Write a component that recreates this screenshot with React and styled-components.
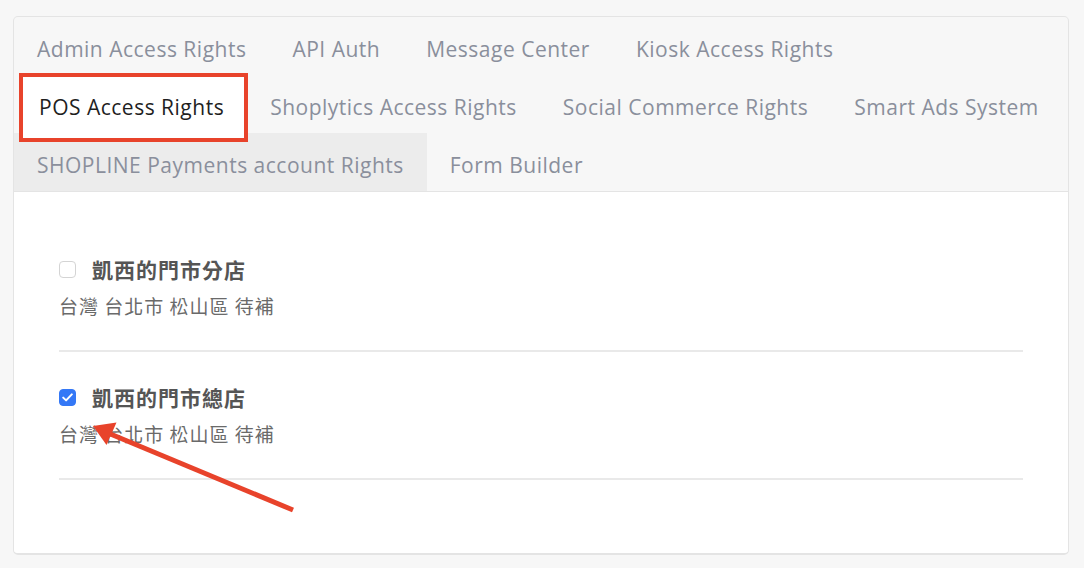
import React from "react";
import styled, { createGlobalStyle } from "styled-components";

const GlobalStyle = createGlobalStyle`
	html, body {
		margin: 0;
		padding: 0;
		background: #f7f7f7;
		font-family: "Open Sans", "Noto Sans CJK TC", sans-serif;
	}
`;

const Page = styled.div`
	position: relative;
	width: 1084px;
	height: 568px;
	padding: 16px 15px 13px 13px;
	box-sizing: border-box;
`;

const Card = styled.div`
	height: 100%;
	border: 1px solid #e4e4e4;
	border-bottom-width: 2px;
	border-radius: 5px;
	background: #f7f7f7;
	box-sizing: border-box;
	overflow: hidden;
	display: flex;
	flex-direction: column;
`;

const TabBar = styled.div`
	display: flex;
	flex-wrap: wrap;
	border-bottom: 1px solid #e4e4e4;
`;

const Tab = styled.a`
	position: relative;
	z-index: ${(p) => (p.$active ? 1 : 0)};
	display: flex;
	align-items: center;
	box-sizing: border-box;
	height: 58px;
	padding: ${(p) => (p.$active ? "5px 23px 0 25px" : "5px 23px 0")};
	font-size: 21px;
	letter-spacing: 0.5px;
	color: ${(p) => (p.$active ? "#1f1f1f" : "#8a8f9c")};
	background: ${(p) => (p.$hover ? "#ececec" : "transparent")};
	white-space: nowrap;
	cursor: pointer;

	${(p) =>
		p.$active &&
		`
		&::after {
			content: "";
			position: absolute;
			left: 5px;
			right: -1px;
			top: -2px;
			bottom: -9px;
			border: 4px solid #e8432b;
			background: #fff;
			z-index: -1;
		}
	`}
`;

const Body = styled.div`
	flex: 1;
	background: #fff;
	padding: 32px 45px 0;
`;

const Item = styled.div`
	padding: 30px 0 31px;
	border-bottom: 2px solid #e9e9e9;
`;

const LabelRow = styled.label`
	display: flex;
	align-items: center;
	gap: 16px;
	height: 30px;
`;

const Box = styled.span`
	width: 17px;
	height: 17px;
	box-sizing: border-box;
	border-radius: 4px;
	border: 1px solid ${(p) => (p.$checked ? "#3478f6" : "#d4d4d4")};
	background: ${(p) => (p.$checked ? "#3478f6" : "#fff")};
	display: flex;
	align-items: center;
	justify-content: center;
	flex-shrink: 0;
`;

const StoreName = styled.span`
	font-family: "Noto Sans CJK TC", sans-serif;
	font-size: 21px;
	letter-spacing: 1px;
	font-weight: 700;
	color: #555;
`;

const Address = styled.div`
	margin-top: 9px;
	line-height: 26px;
	font-family: "Noto Sans CJK TC", sans-serif;
	font-size: 19px;
	letter-spacing: 1px;
	color: #6a6a6a;
`;

const Annotation = styled.svg`
	position: absolute;
	left: 0;
	top: 0;
	pointer-events: none;
`;

const tabs = [
	"Admin Access Rights",
	"API Auth",
	"Message Center",
	"Kiosk Access Rights",
	"POS Access Rights",
	"Shoplytics Access Rights",
	"Social Commerce Rights",
	"Smart Ads System",
	"SHOPLINE Payments account Rights",
	"Form Builder",
];

const stores = [
	{ name: "凱西的門市分店", address: "台灣 台北市 松山區 待補", checked: false },
	{ name: "凱西的門市總店", address: "台灣 台北市 松山區 待補", checked: true },
];

const Checkbox = ({ checked }) => (
	<Box $checked={checked}>
		{checked && (
			<svg width="11" height="9" viewBox="0 0 11 9">
				<path
					d="M1.2 4.6 L4.1 7.4 L9.8 1.4"
					fill="none"
					stroke="#fff"
					strokeWidth="2"
					strokeLinecap="round"
					strokeLinejoin="round"
				/>
			</svg>
		)}
	</Box>
);

const App = () => {
	return (
		<>
			<GlobalStyle />
			<Page>
				<Card>
					<TabBar>
						{tabs.map((t) => (
							<Tab
								key={t}
								$active={t === "POS Access Rights"}
								$hover={t.startsWith("SHOPLINE")}
							>
								{t}
							</Tab>
						))}
					</TabBar>
					<Body>
						{stores.map((s) => (
							<Item key={s.name}>
								<LabelRow>
									<Checkbox checked={s.checked} />
									<StoreName>{s.name}</StoreName>
								</LabelRow>
								<Address>{s.address}</Address>
							</Item>
						))}
					</Body>
				</Card>
				{/* arrow pointing at the checked store */}
				<Annotation width="1084" height="568" viewBox="0 0 1084 568">
					<line
						x1="293"
						y1="510"
						x2="108"
						y2="433"
						stroke="#e8432b"
						strokeWidth="5"
					/>
					<polygon points="93,426 116.5,422.5 106.5,445" fill="#e8432b" />
				</Annotation>
			</Page>
		</>
	);
};

export default App;
